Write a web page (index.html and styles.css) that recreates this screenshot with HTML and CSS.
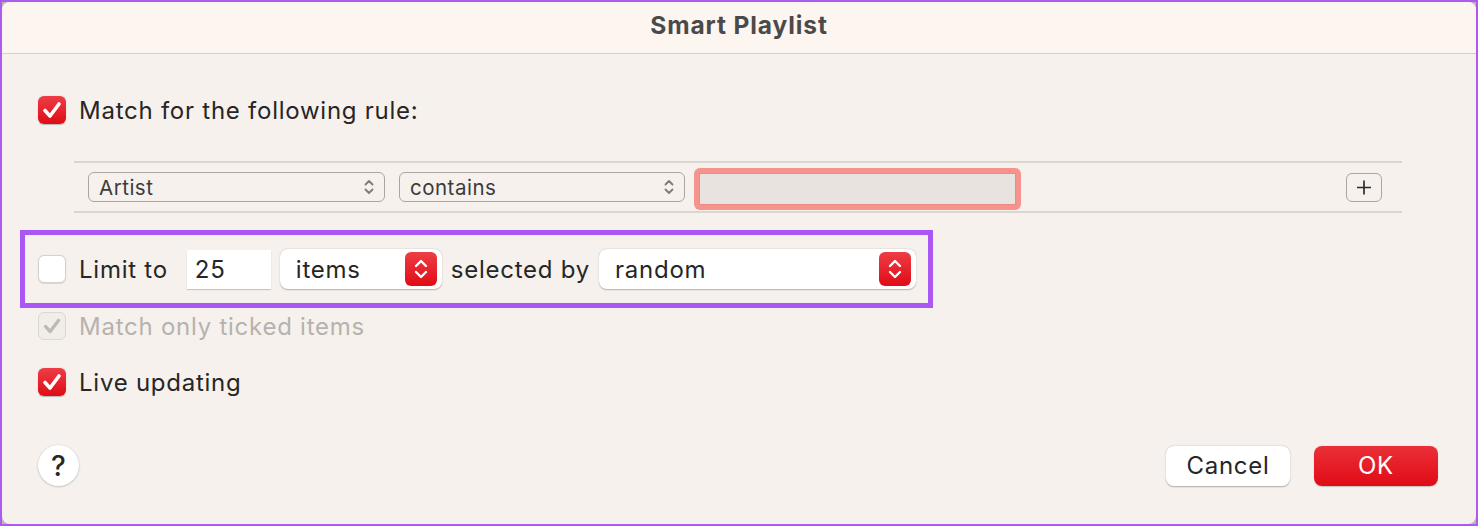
FILE: index.html
```html
<!DOCTYPE html>
<html>
<head>
<meta charset="utf-8">
<link rel="stylesheet" href="styles.css">
</head>
<body>
<div class="frame">
  <div class="window">
    <div class="titlebar">Smart Playlist</div>
    <div class="content">
      <div class="row row-match">
        <span class="cb cb-on"><svg viewBox="0 0 28 28"><path d="M7 14.5 L12 20 L21 8" /></svg></span>
        <span class="label">Match for the following rule:</span>
      </div>

      <div class="rules">
        <div class="popup popup-artist">
          <span>Artist</span>
          <svg class="chev-gray" viewBox="0 0 12 18"><path d="M2.5 6.5 L6 3 L9.5 6.5 M2.5 11.5 L6 15 L9.5 11.5" /></svg>
        </div>
        <div class="popup popup-contains">
          <span>contains</span>
          <svg class="chev-gray" viewBox="0 0 12 18"><path d="M2.5 6.5 L6 3 L9.5 6.5 M2.5 11.5 L6 15 L9.5 11.5" /></svg>
        </div>
        <div class="field-focus"><div class="field-inner"></div></div>
        <div class="plus"><svg viewBox="0 0 36 29"><path d="M18 7 V22 M10.5 14.5 H25.5" /></svg></div>
      </div>

      <div class="highlight">
        <span class="cb cb-off"></span>
        <span class="label">Limit to</span>
        <div class="num">25</div>
        <div class="pop-white pop-items">
          <span>items</span>
          <span class="stepper"><svg viewBox="0 0 32 34"><path d="M11 14 L16 9 L21 14 M11 20 L16 25 L21 20" /></svg></span>
        </div>
        <span class="label label-sel">selected by</span>
        <div class="pop-white pop-random">
          <span>random</span>
          <span class="stepper"><svg viewBox="0 0 32 34"><path d="M11 14 L16 9 L21 14 M11 20 L16 25 L21 20" /></svg></span>
        </div>
      </div>

      <div class="row row-ticked">
        <span class="cb cb-dis"><svg viewBox="0 0 28 28"><path d="M7 14.5 L12 20 L21 8" /></svg></span>
        <span class="label label-dis">Match only ticked items</span>
      </div>

      <div class="row row-live">
        <span class="cb cb-on"><svg viewBox="0 0 28 28"><path d="M7 14.5 L12 20 L21 8" /></svg></span>
        <span class="label">Live updating</span>
      </div>

      <div class="footer">
        <div class="help">?</div>
        <div class="btn btn-cancel">Cancel</div>
        <div class="btn btn-ok">OK</div>
      </div>
    </div>
  </div>
</div>
</body>
</html>
```

FILE: styles.css
```css
* { box-sizing: border-box; }
html, body { margin: 0; padding: 0; }
body {
  width: 1478px;
  height: 526px;
  overflow: hidden;
  font-family: Inter, "Liberation Sans", sans-serif;
  color: #262626;
}
.frame {
  width: 1478px;
  height: 526px;
  border: 2px solid #ad5af2;
  background: #bcb7b3;
}
.window {
  width: 100%;
  height: 100%;
  background: #f6f1ed;
  border-radius: 8px;
  overflow: hidden;
  display: flex;
  flex-direction: column;
}
.titlebar {
  height: 52px;
  flex: none;
  background: #fdf5f0;
  border-bottom: 1px solid #d5cfca;
  display: flex;
  align-items: center;
  justify-content: center;
  font-weight: 700;
  font-size: 24.5px;
  letter-spacing: 0.9px;
  color: #4a4a4a;
  padding-bottom: 5px;
}
.content {
  flex: 1;
  display: flex;
  flex-direction: column;
  padding-left: 36px;
}
.row {
  display: flex;
  align-items: center;
  height: 28px;
}
.row-match { margin-top: 42px; }
.row-ticked { margin-top: 4px; }
.row-live { margin-top: 28px; }
.label {
  font-size: 24px;
  letter-spacing: 0.75px;
  margin-left: 13px;
  color: #262626;
  white-space: nowrap;
}
.label-dis { color: #b6b2ae; }
.cb {
  width: 28px;
  height: 28px;
  flex: none;
  border-radius: 6px;
  display: flex;
  align-items: center;
  justify-content: center;
}
.cb svg { width: 28px; height: 28px; }
.cb svg path { fill: none; stroke-width: 3.6; stroke-linecap: round; stroke-linejoin: round; }
.cb-on {
  background: linear-gradient(#ee3d45, #df0c16);
  box-shadow: 0 0.5px 1px rgba(0,0,0,0.25);
}
.cb-on svg path { stroke: #ffffff; }
.cb-off {
  background: #ffffff;
  border: 1px solid #d6d1cd;
  box-shadow: 0 0.5px 1px rgba(0,0,0,0.12);
}
.cb-dis {
  background: #f1ede9;
  border: 1px solid #dcd7d3;
}
.cb-dis svg path { stroke: #bdb9b5; }

.rules {
  margin-top: 37px;
  margin-left: 36px;
  width: 1328px;
  height: 52px;
  border-top: 2px solid #dcd6d1;
  border-bottom: 2px solid #dcd6d1;
  display: flex;
  align-items: center;
  padding-left: 14px;
  padding-right: 20px;
}
.popup {
  height: 30px;
  border: 1.5px solid #aba5a0;
  border-radius: 6px;
  display: flex;
  align-items: center;
  justify-content: space-between;
  padding: 0 9px 0 10px;
  font-size: 20.5px;
  letter-spacing: 0.5px;
  color: #3b3b3b;
}
.popup-artist { width: 297px; }
.popup-contains { width: 286px; margin-left: 14px; }
.chev-gray { width: 12px; height: 18px; }
.chev-gray path { fill: none; stroke: #7f7a76; stroke-width: 1.8; stroke-linecap: round; stroke-linejoin: round; }
.field-focus {
  margin-left: 9px;
  width: 327px;
  height: 42px;
  border-radius: 6px;
  background: #f6938d;
  padding: 5px;
  margin-top: 4px;
}
.field-inner {
  width: 100%;
  height: 100%;
  background: #e8e3de;
  border: 1px solid #ee8a84;
}
.plus {
  margin-left: auto;
  width: 36px;
  height: 29px;
  border: 1.5px solid #aba5a0;
  border-radius: 6px;
}
.plus svg { width: 100%; height: 100%; display: block; }
.plus svg path { fill: none; stroke: #2a2a2a; stroke-width: 1.8; }

.highlight {
  margin-top: 17px;
  margin-left: -18px;
  width: 913px;
  height: 78px;
  border: 5px solid #ab57f3;
  display: flex;
  align-items: center;
  padding-left: 13px;
}
.num {
  margin-left: 19px;
  width: 84px;
  height: 39px;
  flex: none;
  background: #ffffff;
  box-shadow: 0 1px 1px rgba(0,0,0,0.18);
  font-size: 24px;
  letter-spacing: 0.75px;
  padding-left: 8px;
  display: flex;
  align-items: center;
  color: #262626;
}
.pop-white {
  height: 40px;
  flex: none;
  background: #ffffff;
  border-radius: 8px;
  box-shadow: 0 0.5px 1.5px rgba(0,0,0,0.28);
  display: flex;
  align-items: center;
  justify-content: space-between;
  padding: 0 5px 0 16px;
  font-size: 24px;
  letter-spacing: 0.75px;
  color: #262626;
}
.pop-items { margin-left: 9px; width: 162px; }
.pop-random { margin-left: 9px; width: 317px; }
.label-sel { margin-left: 9px; }
.stepper {
  width: 32px;
  height: 34px;
  border-radius: 6px;
  background: linear-gradient(#ee3d45, #df0c16);
  display: block;
}
.stepper svg { width: 32px; height: 34px; display: block; }
.stepper svg path { fill: none; stroke: #ffffff; stroke-width: 2.4; stroke-linecap: round; stroke-linejoin: round; }

.footer {
  margin-top: 49px;
  display: flex;
  align-items: center;
  padding-right: 38px;
}
.help {
  width: 41px;
  height: 41px;
  border-radius: 50%;
  background: #ffffff;
  box-shadow: 0 0.5px 2px rgba(0,0,0,0.3);
  display: flex;
  align-items: center;
  justify-content: center;
  font-size: 28px;
  font-weight: 500;
  color: #262626;
}
.btn {
  width: 124px;
  height: 40px;
  border-radius: 8px;
  display: flex;
  align-items: center;
  justify-content: center;
  font-size: 24px;
  letter-spacing: 0.75px;
}
.btn-cancel {
  margin-left: auto;
  background: #ffffff;
  box-shadow: 0 0.5px 1.5px rgba(0,0,0,0.3);
  color: #262626;
}
.btn-ok {
  margin-left: 24px;
  background: linear-gradient(#eb3038, #e00b15);
  color: #ffffff;
  box-shadow: 0 0.5px 1px rgba(0,0,0,0.2);
}
```
